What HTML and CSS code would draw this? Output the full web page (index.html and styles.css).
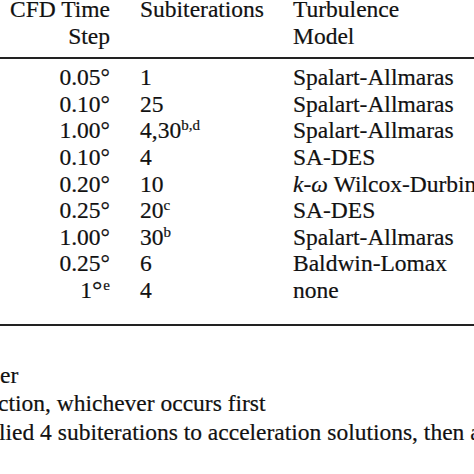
FILE: index.html
```html
<!DOCTYPE html>
<html>
<head>
<meta charset="utf-8">
<link rel="stylesheet" href="styles.css">
</head>
<body>
<div class="page">
  <div class="table">
    <div class="row head">
      <div class="c1">CFD Time<br>Step</div>
      <div class="c2">Subiterations</div>
      <div class="c3">Turbulence<br>Model</div>
    </div>
    <div class="rule rule-top"></div>
    <div class="body">
      <div class="row"><div class="c1">0.05°</div><div class="c2">1</div><div class="c3">Spalart-Allmaras</div></div>
      <div class="row"><div class="c1">0.10°</div><div class="c2">25</div><div class="c3">Spalart-Allmaras</div></div>
      <div class="row"><div class="c1">1.00°</div><div class="c2">4,30<sup>b,d</sup></div><div class="c3">Spalart-Allmaras</div></div>
      <div class="row"><div class="c1">0.10°</div><div class="c2">4</div><div class="c3">SA-DES</div></div>
      <div class="row"><div class="c1">0.20°</div><div class="c2">10</div><div class="c3"><i>k</i>-<i>ω</i> Wilcox-Durbin</div></div>
      <div class="row"><div class="c1">0.25°</div><div class="c2">20<sup>c</sup></div><div class="c3">SA-DES</div></div>
      <div class="row"><div class="c1">1.00°</div><div class="c2">30<sup>b</sup></div><div class="c3">Spalart-Allmaras</div></div>
      <div class="row"><div class="c1">0.25°</div><div class="c2">6</div><div class="c3">Baldwin-Lomax</div></div>
      <div class="row"><div class="c1">1<span class="ring">°</span><sup class="se">e</sup></div><div class="c2">4</div><div class="c3">none</div></div>
    </div>
    <div class="rule rule-bottom"></div>
  </div>
  <div class="notes">
    <p class="n1">er</p>
    <p class="n2">ction, whichever occurs first</p>
    <p class="n3">lied 4 subiterations to acceleration solutions, then a</p>
  </div>
</div>
</body>
</html>
```
FILE: styles.css
```css
html, body {
  margin: 0;
  padding: 0;
  background: #fff;
}
body {
  width: 474px;
  height: 474px;
  overflow: hidden;
  font-family: "Liberation Serif", "Times New Roman", serif;
  font-size: 23.5px;
  color: #111;
  -webkit-text-stroke: 0.2px #111;
}
.page {
  margin-top: -4px;
}
.row {
  display: grid;
  grid-template-columns: 110px 123px 1fr;
  column-gap: 30px;
  line-height: 26.65px;
  white-space: nowrap;
}
.c1 {
  text-align: right;
}
.head {
  height: 53.3px;
}
.rule {
  width: 474px;
  height: 2px;
  background: #222;
}
.rule-top {
  margin-top: 7.4px;
}
.body {
  padding-top: 5.2px;
  padding-bottom: 20.3px;
}
sup {
  font-size: 15px;
  line-height: 0;
  vertical-align: 8px;
}
.ring {
  font-size: 26px;
  line-height: 0;
}
.se {
  margin-left: 1px;
}
.notes {
  margin-top: 34.8px;
  white-space: nowrap;
}
.notes p {
  margin: 0;
  line-height: 28.5px;
}
.n2 {
  text-indent: -2px;
}
.n3 {
  text-indent: -1px;
}
```
